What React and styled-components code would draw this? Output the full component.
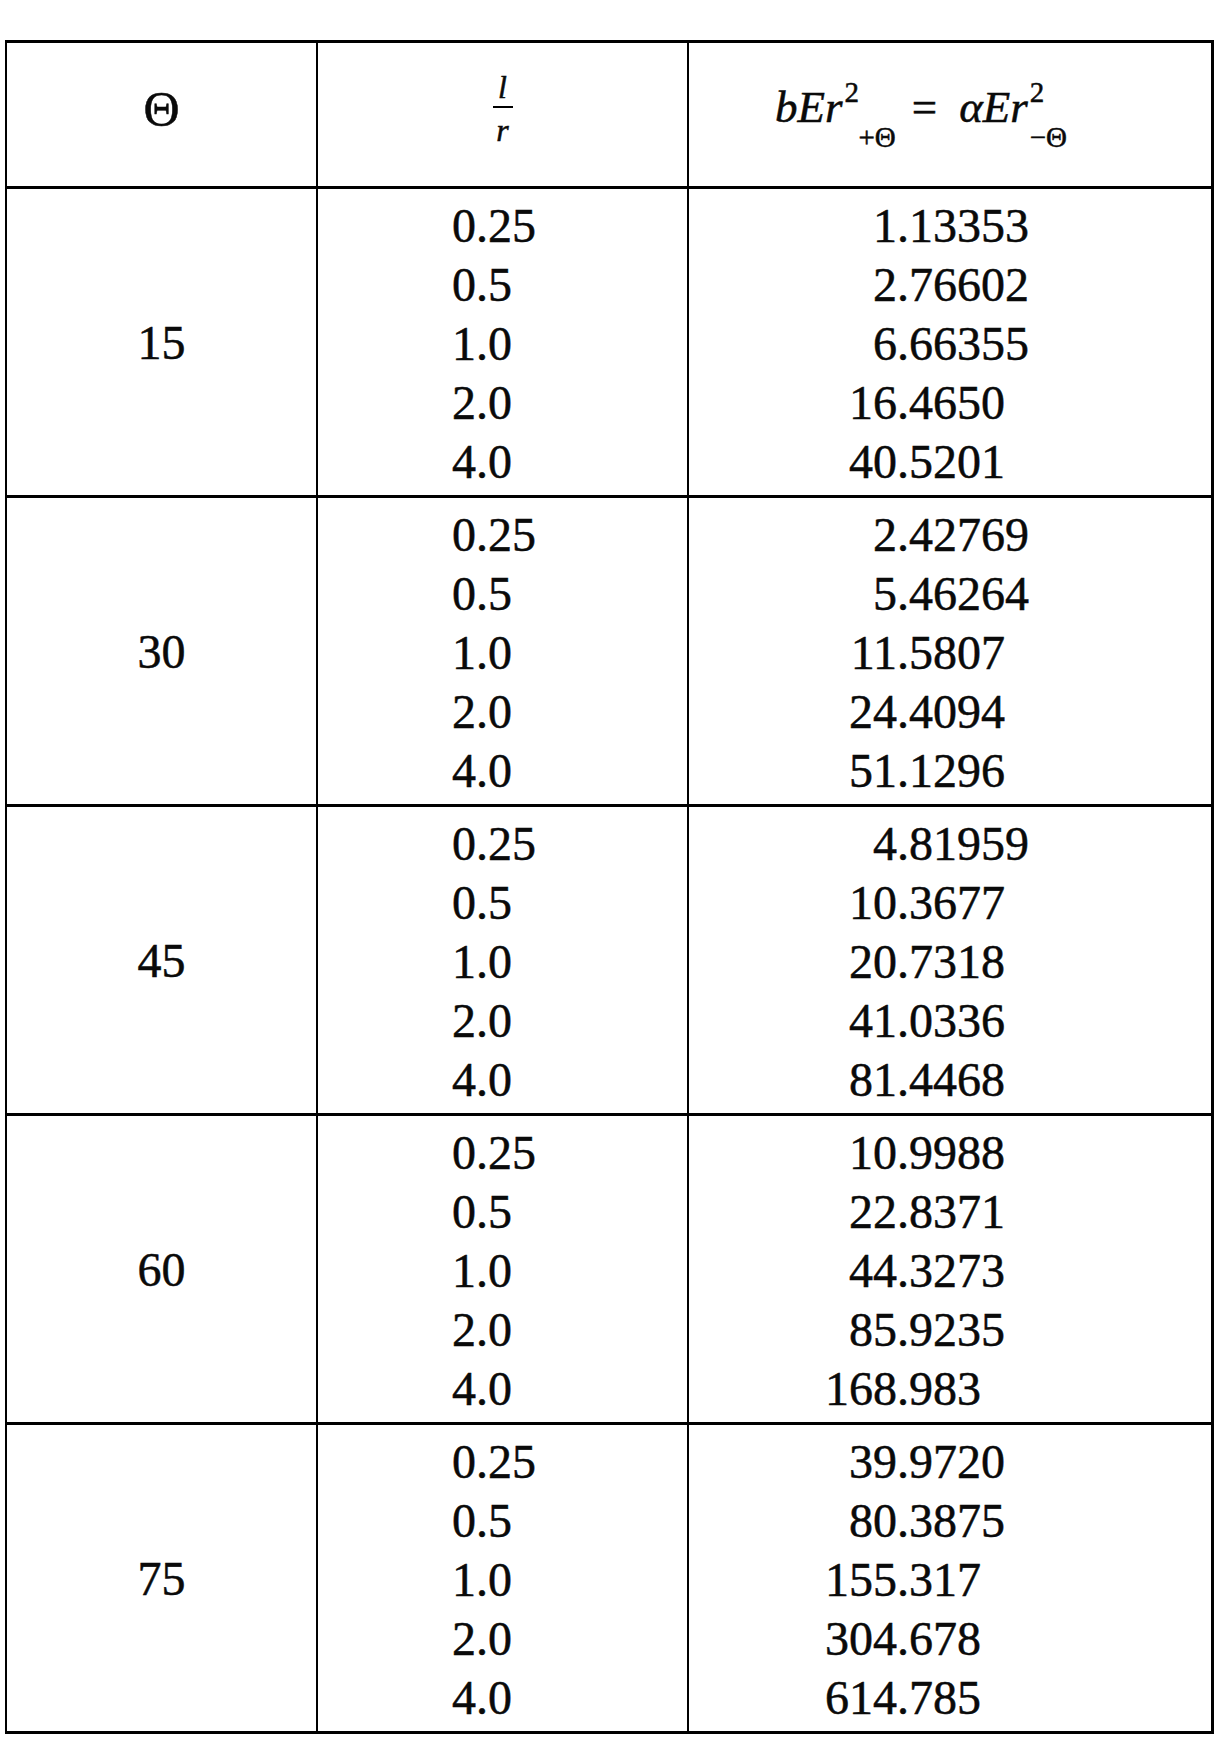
import React from "react";
import styled, { createGlobalStyle } from "styled-components";

const GlobalStyle = createGlobalStyle`
  html, body {
    margin: 0;
    padding: 0;
    background: #fff;
  }
  body {
    font-family: "Liberation Serif", "Times New Roman", serif;
    color: #0a0a0a;
    -webkit-text-stroke: 0.5px #0a0a0a;
  }
`;

const Page = styled.div`
  padding: 40px 0 0 5px;
`;

// black background + gaps draw the rules of the table
const Grid = styled.div`
  display: grid;
  grid-template-columns: 309px 369px 522px;
  grid-template-rows: 143px repeat(5, 306px);
  column-gap: 2px;
  row-gap: 3px;
  width: fit-content;
  padding: 3px 3px 3px 2px;
  background: #000;
`;

const HeadCell = styled.div`
  background: #fff;
  display: flex;
  align-items: center;
  justify-content: center;
  padding-bottom: ${(p) => p.$lift ?? 12}px;
`;

const ThetaCell = styled.div`
  background: #fff;
  display: flex;
  align-items: center;
  justify-content: center;
  font-size: 48px;
`;

const ListCell = styled.div`
  background: #fff;
  padding: 7px 0 0 ${(p) => p.$indent}px;
  font-size: 48px;
  line-height: 59px;
`;

const Line = styled.div`
  height: 59px;
  white-space: nowrap;
`;

const IntPart = styled.span`
  display: inline-block;
  width: 72px;
  text-align: right;
`;

const BigTheta = styled.span`
  font-size: 50px;
`;

const Fraction = styled.span`
  display: inline-flex;
  flex-direction: column;
  align-items: center;
  font-style: italic;
  font-size: 32px;
  line-height: 1;
`;

const FracBar = styled.span`
  width: 20px;
  height: 2px;
  background: #000;
  margin: 3px 0 6px;
`;

const Formula = styled.span`
  font-size: 45px;
  line-height: 45px;
  white-space: nowrap;
  margin-right: 58px;
`;

const Ital = styled.span`
  font-style: italic;
`;

const Scripts = styled.span`
  display: inline-flex;
  flex-direction: column;
  align-items: flex-start;
  font-size: 29px;
  line-height: 29px;
  vertical-align: 20px;
  margin-left: 2px;
`;

const Sub = styled.span`
  margin-top: 16px;
  margin-left: ${(p) => p.$shift}px;
`;

const Eq = styled.span`
  margin: 0 22px 0 16px;
`;

const ratios = ["0.25", "0.5", "1.0", "2.0", "4.0"];

const groups = [
  { theta: "15", values: ["1.13353", "2.76602", "6.66355", "16.4650", "40.5201"] },
  { theta: "30", values: ["2.42769", "5.46264", "11.5807", "24.4094", "51.1296"] },
  { theta: "45", values: ["4.81959", "10.3677", "20.7318", "41.0336", "81.4468"] },
  { theta: "60", values: ["10.9988", "22.8371", "44.3273", "85.9235", "168.983"] },
  { theta: "75", values: ["39.9720", "80.3875", "155.317", "304.678", "614.785"] },
];

const Value = ({ text }) => {
  const [int, frac] = text.split(".");
  return (
    <Line>
      <IntPart>{int}</IntPart>.{frac}
    </Line>
  );
};

export default function App() {
  return (
    <Page>
      <GlobalStyle />
      <Grid>
        <HeadCell>
          <BigTheta>Θ</BigTheta>
        </HeadCell>
        <HeadCell>
          <Fraction>
            <span>l</span>
            <FracBar />
            <span>r</span>
          </Fraction>
        </HeadCell>
        <HeadCell $lift={0}>
          <Formula>
            <Ital>bEr</Ital>
            <Scripts>
              <span>2</span>
              <Sub $shift={14}>+Θ</Sub>
            </Scripts>
            <Eq>=</Eq>
            <Ital>αEr</Ital>
            <Scripts>
              <span>2</span>
              <Sub $shift={0}>−Θ</Sub>
            </Scripts>
          </Formula>
        </HeadCell>

        {groups.map((g) => (
          <React.Fragment key={g.theta}>
            <ThetaCell>{g.theta}</ThetaCell>
            <ListCell $indent={134}>
              {ratios.map((r) => (
                <Line key={r}>{r}</Line>
              ))}
            </ListCell>
            <ListCell $indent={136}>
              {g.values.map((v) => (
                <Value key={v} text={v} />
              ))}
            </ListCell>
          </React.Fragment>
        ))}
      </Grid>
    </Page>
  );
}
